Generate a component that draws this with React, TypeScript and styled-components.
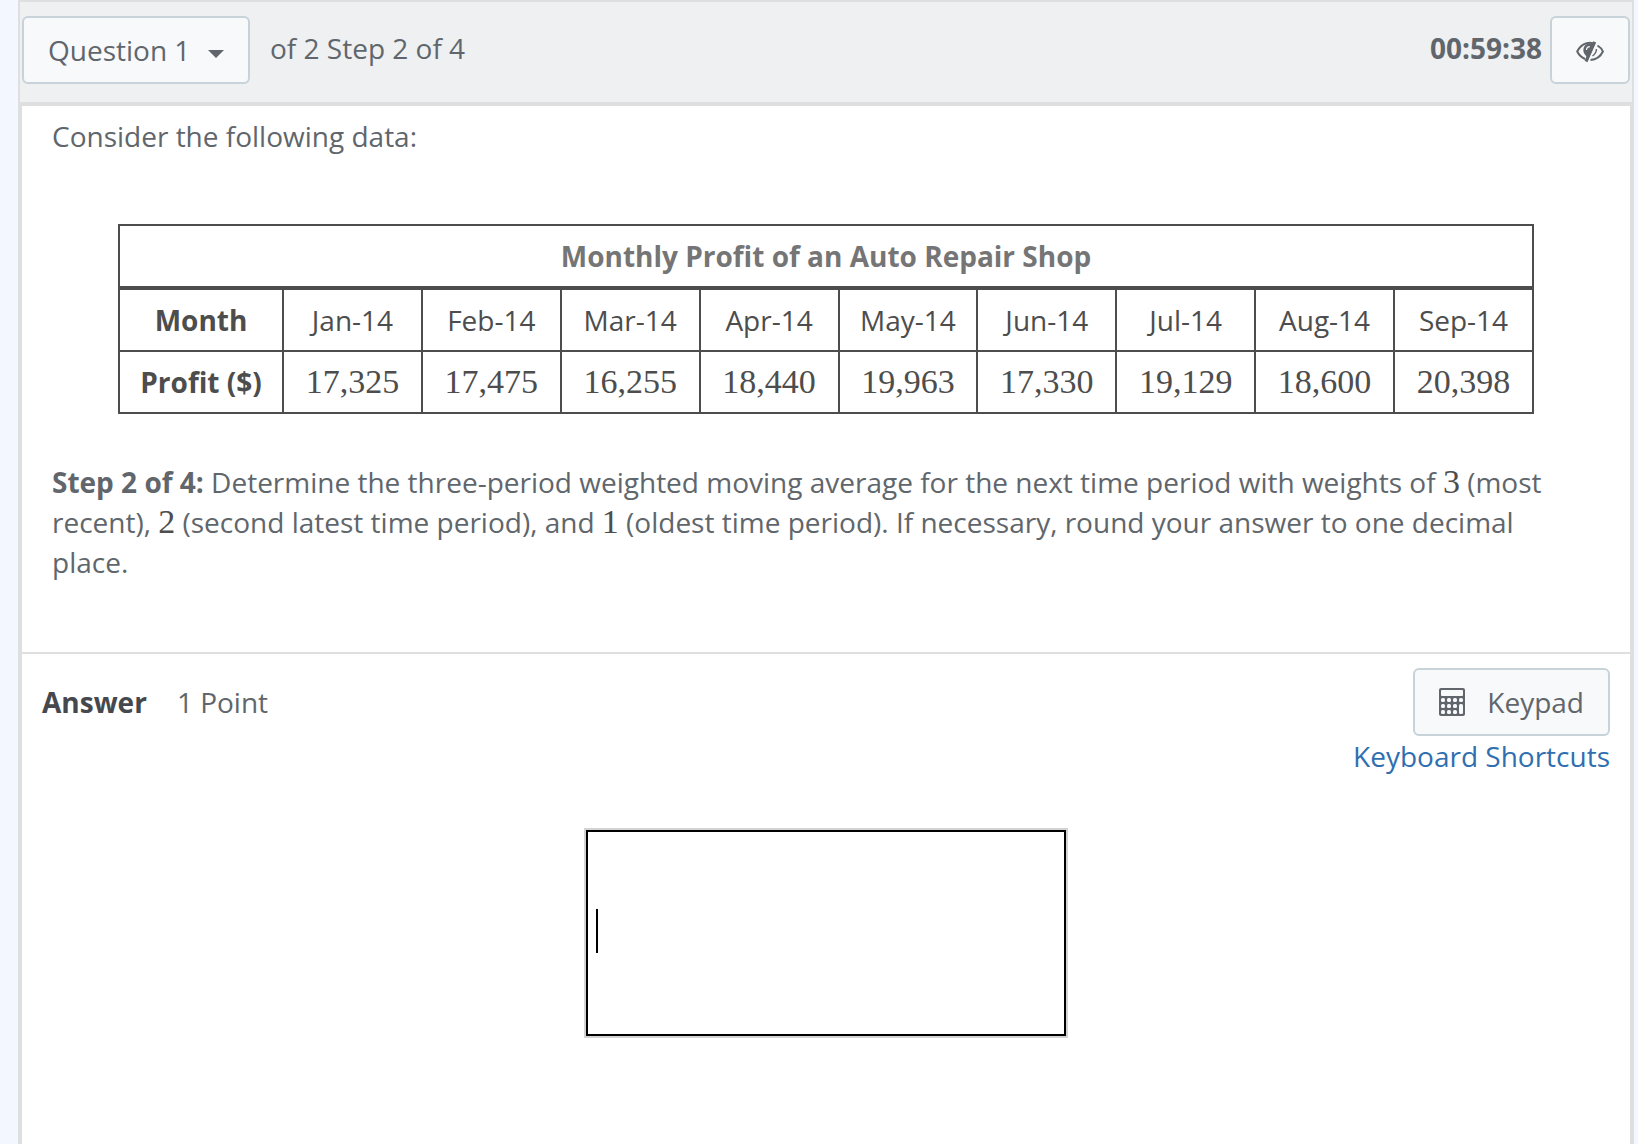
import React from 'react';
import styled, { createGlobalStyle } from 'styled-components';

const GlobalStyle = createGlobalStyle`
  *, *::before, *::after { box-sizing: border-box; }
  html, body, #root { height: 100%; }
  body {
    margin: 0;
    background: #f3f7ff;
    color: #60666b;
    font: 28px/40px 'Open Sans', 'Noto Sans', sans-serif;
  }
`;

const Page = styled.div`
  display: flex;
  flex-direction: column;
  min-height: 100%;
  padding: 0 4px 0 18px;
`;

const Toolbar = styled.header`
  display: flex;
  align-items: flex-start;
  border: 2px solid #dfdfdf;
  border-bottom-width: 4px;
  background: #eff0f2;
  padding: 14px 2px 18px;
`;

const Control = styled.button`
  display: flex;
  align-items: center;
  justify-content: center;
  height: 68px;
  border: 2px solid #c7d3d9;
  border-radius: 6px;
  background: #f8f9fb;
  padding: 0 24px;
  color: inherit;
  font: inherit;
`;

const Picker = styled.div`
  position: relative;
`;

const QuestionSelect = styled(Control)`
  appearance: none;
  width: 228px;
`;

const PickerArrow = styled.svg`
  position: absolute;
  top: 34px;
  right: 26px;
  pointer-events: none;
`;

const Progress = styled.span`
  margin-left: 20px;
  padding-top: 12px;
`;

const Timer = styled.time`
  margin-left: auto;
  padding: 12px 8px 0 0;
  font-weight: 700;
`;

const IconButton = styled(Control)`
  width: 80px;
  padding: 4px 0 0;
`;

const Panel = styled.main`
  flex: 1;
  border: solid #dfdfdf;
  border-width: 0 4px;
  background: #fff;
`;

const Question = styled.section`
  border-bottom: 2px solid #dfdfdf;
  padding: 10px 30px 70px;
`;

const Paragraph = styled.p`
  margin: 0;
  padding-right: 40px;
`;

const DataTable = styled.table`
  table-layout: fixed;
  width: 1416px;
  max-width: 100%;
  margin: 68px auto 48px;
  border-collapse: collapse;
  border: 2px solid #4d4d4d;
  color: #4d4d4d;
  text-align: center;
`;

const LabelColumn = styled.col`
  width: 164px;
`;

const Row = styled.tr<{ $height: number }>`
  height: ${({ $height }) => $height}px;
`;

const TitleCell = styled.th`
  border-bottom: 4px solid #4d4d4d;
  padding: 0;
  color: #757575;
`;

const HeadCell = styled.th`
  border: 2px solid #4d4d4d;
  padding: 0;
`;

const Cell = styled.td`
  border: 2px solid #4d4d4d;
  padding: 0;
`;

const MathText = styled.span`
  color: #4d4d4d;
  font-family: 'Liberation Serif', serif;
  font-size: 34px;
  line-height: 1;
`;

const Answer = styled.section`
  padding: 14px 20px;
`;

const AnswerBar = styled.div`
  display: flex;
  justify-content: space-between;
`;

const AnswerTitle = styled.div`
  display: flex;
  align-items: baseline;
  gap: 30px;
  padding-top: 14px;
`;

const AnswerHeading = styled.h2`
  margin: 0;
  color: #45494d;
  font-size: inherit;
  font-weight: 700;
`;

const Tools = styled.div`
  display: flex;
  flex-direction: column;
  align-items: flex-end;
`;

const KeypadButton = styled(Control)`
  gap: 22px;
`;

const ShortcutLink = styled.a`
  color: #2f6fb0;
  text-decoration: none;
`;

const AnswerField = styled.div`
  position: relative;
  width: 484px;
  max-width: 100%;
  margin: 52px auto 0;
`;

const AnswerInput = styled.input`
  display: block;
  width: 100%;
  height: 210px;
  border: 2px solid #d3d3d3;
  outline: 2px solid #000;
  outline-offset: -4px;
  background: #fff;
  padding: 0 12px;
  color: inherit;
  font: inherit;
`;

const Caret = styled.span`
  position: absolute;
  top: 81px;
  left: 12px;
  width: 2px;
  height: 44px;
  background: #000;
`;

const PROFITS = [
  ['Jan-14', '17,325'],
  ['Feb-14', '17,475'],
  ['Mar-14', '16,255'],
  ['Apr-14', '18,440'],
  ['May-14', '19,963'],
  ['Jun-14', '17,330'],
  ['Jul-14', '19,129'],
  ['Aug-14', '18,600'],
  ['Sep-14', '20,398'],
];

function HiddenEyeIcon() {
  return (
    <svg width="28" height="22" viewBox="0 0 28 22" fill="none" stroke="#60666b" strokeWidth="2" aria-hidden="true">
      <path d="M17 2.2C15 1.6 12.5 1.6 10.5 2.3C6 3.6 3 7 1.2 10.5C3 14 5.5 16.5 9 18" />
      <path d="M21.5 4.5C24 6 26 8.2 26.9 10.5C25 14.5 20.5 18.5 14.5 19" />
      <path d="M14 2.5C7.5 2.5 6 9 8.5 13L11 16L17.5 3.5Z" fill="#60666b" stroke="none" />
      <path d="M18.7 0.8L10 20.5" strokeWidth="3.2" />
      <path d="M20.5 8C20.3 11 18.7 13.5 16.5 15" strokeWidth="1.5" />
      <path d="M10.5 9C10.6 7 12 5.7 13.8 5.7" stroke="#f8f9fb" strokeWidth="1.2" />
    </svg>
  );
}

function CalculatorIcon() {
  const dots = [0, 1, 2].flatMap((row) => [0, 1, 2, 3].map((col) => [row, col]));
  return (
    <svg width="26" height="28" viewBox="0 0 26 28" aria-hidden="true">
      <rect width="26" height="28" rx="2" fill="#60666b" />
      <rect x="2" y="2" width="22" height="6" rx="1" fill="#f8f9fb" />
      {dots.map(([row, col]) =>
        row > 0 && col === 3 ? null : (
          <rect key={`${row}-${col}`} x={2 + col * 6} y={10 + row * 6} width="4" height="4" rx="1.5" fill="#f8f9fb" />
        ),
      )}
      <rect x="20" y="16" width="4" height="10" rx="1.5" fill="#f8f9fb" />
    </svg>
  );
}

export default function App() {
  return (
    <>
      <GlobalStyle />
      <Page>
        <Toolbar>
          <Picker>
            <QuestionSelect as="select" aria-label="Question" defaultValue="1">
              <option value="1">Question 1</option>
              <option value="2">Question 2</option>
            </QuestionSelect>
            <PickerArrow width="16" height="8" viewBox="0 0 16 8" aria-hidden="true">
              <path d="M0 0H16L8 8Z" fill="#60666b" />
            </PickerArrow>
          </Picker>
          <Progress>of 2 Step 2 of 4</Progress>
          <Timer>00:59:38</Timer>
          <IconButton type="button" aria-label="Hide timer">
            <HiddenEyeIcon />
          </IconButton>
        </Toolbar>
        <Panel>
          <Question>
            <Paragraph>Consider the following data:</Paragraph>
            <DataTable>
              <colgroup>
                <LabelColumn />
                <col span={9} />
              </colgroup>
              <thead>
                <Row $height={63}>
                  <TitleCell colSpan={10}>Monthly Profit of an Auto Repair Shop</TitleCell>
                </Row>
              </thead>
              <tbody>
                <Row $height={63}>
                  <HeadCell scope="row">Month</HeadCell>
                  {PROFITS.map(([month]) => (
                    <Cell key={month}>{month}</Cell>
                  ))}
                </Row>
                <Row $height={62}>
                  <HeadCell scope="row">Profit ($)</HeadCell>
                  {PROFITS.map(([month, profit]) => (
                    <Cell key={month}>
                      <MathText>{profit}</MathText>
                    </Cell>
                  ))}
                </Row>
              </tbody>
            </DataTable>
            <Paragraph>
              <strong>Step 2 of 4:</strong> Determine the three-period weighted moving average for the next time period
              with weights of <MathText>3</MathText> (most recent), <MathText>2</MathText> (second latest time period),
              and <MathText>1</MathText> (oldest time period). If necessary, round your answer to one decimal place.
            </Paragraph>
          </Question>
          <Answer>
            <AnswerBar>
              <AnswerTitle>
                <AnswerHeading id="answer-heading">Answer</AnswerHeading>
                <span>1 Point</span>
              </AnswerTitle>
              <Tools>
                <KeypadButton type="button">
                  <CalculatorIcon />
                  Keypad
                </KeypadButton>
                <ShortcutLink href="#shortcuts">Keyboard Shortcuts</ShortcutLink>
              </Tools>
            </AnswerBar>
            <AnswerField>
              <AnswerInput type="text" aria-labelledby="answer-heading" />
              <Caret />
            </AnswerField>
          </Answer>
        </Panel>
      </Page>
    </>
  );
}
